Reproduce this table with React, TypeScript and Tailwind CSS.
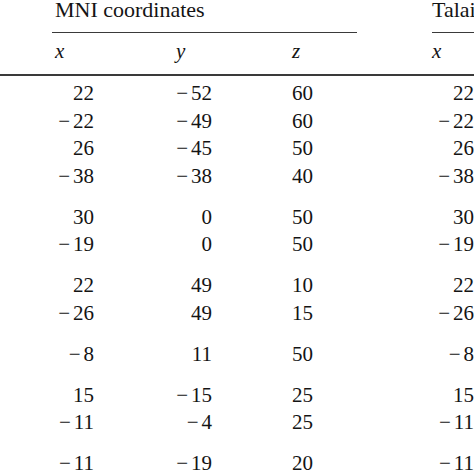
type Row = string[] | null;

// null marks the extra space between row groups
const rows: Row[] = [
  ["22", "−52", "60", "22"],
  ["−22", "−49", "60", "−22"],
  ["26", "−45", "50", "26"],
  ["−38", "−38", "40", "−38"],
  null,
  ["30", "0", "50", "30"],
  ["−19", "0", "50", "−19"],
  null,
  ["22", "49", "10", "22"],
  ["−26", "49", "15", "−26"],
  null,
  ["−8", "11", "50", "−8"],
  null,
  ["15", "−15", "25", "15"],
  ["−11", "−4", "25", "−11"],
  null,
  ["−11", "−19", "20", "−11"],
];

function Num({ v }: { v: string }) {
  if (v.startsWith("−")) {
    return (
      <span>
        <span className="mr-[3px]">−</span>
        {v.slice(1)}
      </span>
    );
  }
  return <span>{v}</span>;
}

export default function App() {
  return (
    <div className="w-[474px] h-[474px] overflow-hidden bg-white text-[#141414] text-[21px] whitespace-nowrap font-['Liberation_Serif','Times_New_Roman',serif]">
      <div className="flex pt-[1px] text-[22px]">
        <div className="w-[52px] shrink-0" />
        <div className="w-[305px] shrink-0 h-[32px] border-b-[1.5px] border-[#3a3a3a] pl-[3px] leading-[18px]">
          MNI coordinates
        </div>
        <div className="w-[75px] shrink-0" />
        <div className="w-[120px] shrink-0 h-[32px] border-b-[1.5px] border-[#3a3a3a] leading-[18px]">
          Talairach coordinates
        </div>
      </div>

      <div className="flex h-[43px] border-b-2 border-[#3a3a3a] pt-[6px] leading-[24px] italic">
        <div className="w-[55px] shrink-0" />
        <div className="w-[121px] shrink-0">x</div>
        <div className="w-[116px] shrink-0">y</div>
        <div className="w-[140px] shrink-0">z</div>
        <div className="w-[60px] shrink-0">x</div>
      </div>

      <div className="pt-[4px]">
        {rows.map((r, i) =>
          r === null ? (
            <div key={i} className="h-[13.5px]" />
          ) : (
            <div key={i} className="flex h-[27.5px] leading-[27.5px]">
              <div className="w-[94px] shrink-0 text-right">
                <Num v={r[0]} />
              </div>
              <div className="w-[118px] shrink-0 text-right">
                <Num v={r[1]} />
              </div>
              <div className="w-[80px] shrink-0" />
              <div className="w-[140px] shrink-0">
                <Num v={r[2]} />
              </div>
              <div className="w-[42px] shrink-0 text-right">
                <Num v={r[3]} />
              </div>
            </div>
          )
        )}
      </div>
    </div>
  );
}
